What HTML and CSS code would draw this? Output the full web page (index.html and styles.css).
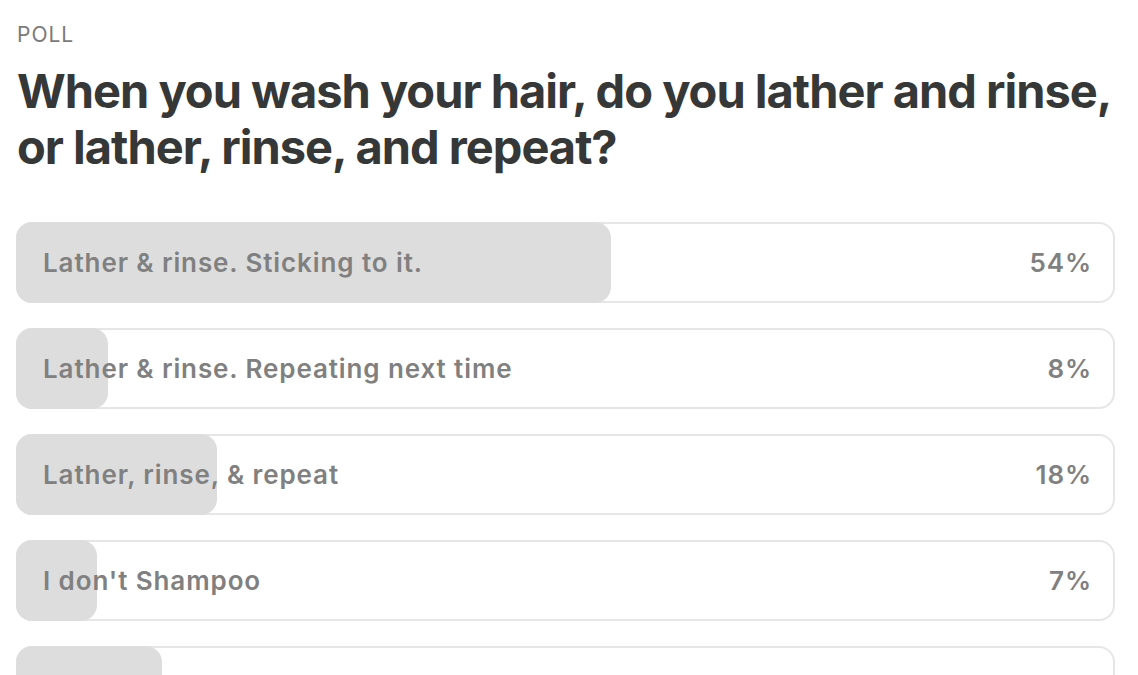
FILE: index.html
```html
<!DOCTYPE html>
<html lang="en">
<head>
<meta charset="utf-8">
<title>Poll</title>
<link rel="stylesheet" href="styles.css">
</head>
<body>
<main class="poll">
  <div class="poll-label">POLL</div>
  <h1 class="poll-question">When you wash your hair, do you lather and rinse, or lather, rinse, and repeat?</h1>
  <div class="options">
    <div class="option">
      <div class="fill" style="width: calc(54% + 4px)"></div>
      <span class="opt-text">Lather &amp; rinse. Sticking to it.</span>
      <span class="opt-pct">54%</span>
    </div>
    <div class="option">
      <div class="fill" style="width: calc(8% + 4px)"></div>
      <span class="opt-text">Lather &amp; rinse. Repeating next time</span>
      <span class="opt-pct">8%</span>
    </div>
    <div class="option">
      <div class="fill" style="width: calc(18% + 4px)"></div>
      <span class="opt-text">Lather, rinse, &amp; repeat</span>
      <span class="opt-pct">18%</span>
    </div>
    <div class="option">
      <div class="fill" style="width: calc(7% + 4px)"></div>
      <span class="opt-text">I don't Shampoo</span>
      <span class="opt-pct">7%</span>
    </div>
    <div class="option">
      <div class="fill" style="width: calc(13% + 4px)"></div>
      <span class="opt-text">I use conditioner, then a rinse</span>
      <span class="opt-pct">13%</span>
    </div>
  </div>
</main>
</body>
</html>
```

FILE: styles.css
```css
html, body {
  margin: 0;
  padding: 0;
  background: #ffffff;
}

body {
  font-family: Inter, "Noto Sans", "Liberation Sans", sans-serif;
  overflow: hidden;
}

.poll {
  width: 1099px;
  padding: 22px 0 0 16px;
}

.poll-label {
  font-size: 21px;
  line-height: 26px;
  font-weight: 400;
  letter-spacing: 1px;
  color: #7a7a7a;
  padding-left: 1px;
}

.poll-question {
  margin: 15px -30px 0 0;
  padding-left: 1px;
  font-size: 47px;
  line-height: 56px;
  font-weight: 700;
  letter-spacing: -1px;
  color: #363737;
}

.options {
  margin-top: 47px;
  display: flex;
  flex-direction: column;
  gap: 25px;
}

.option {
  position: relative;
  height: 77px;
  border: 2px solid #e6e6e6;
  border-radius: 16px;
  display: flex;
  align-items: center;
  justify-content: space-between;
  padding: 0 21px 0 25px;
  box-sizing: content-box;
  font-size: 26px;
  letter-spacing: 0.9px;
  font-weight: 600;
  color: #808080;
}

.fill {
  position: absolute;
  left: -2px;
  top: -2px;
  bottom: -2px;
  background: #dddddd;
  border-radius: 16px;
}

.opt-text,
.opt-pct {
  position: relative;
}
```
